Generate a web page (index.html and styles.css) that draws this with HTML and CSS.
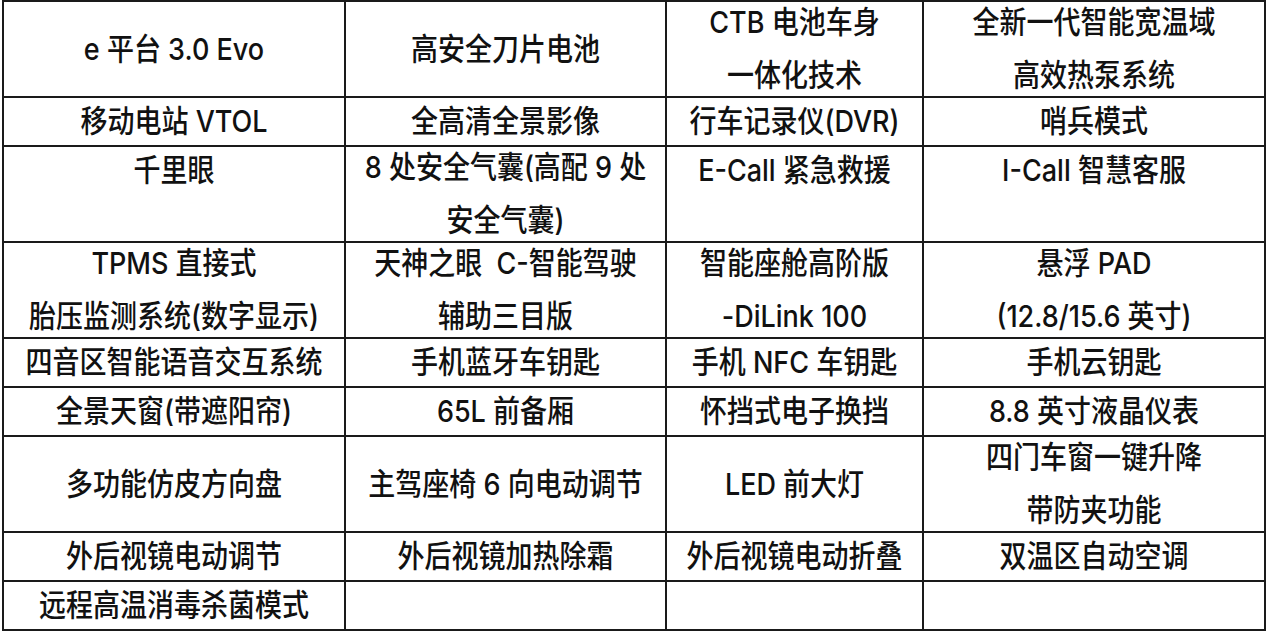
FILE: index.html
```html
<!DOCTYPE html>
<html lang="zh-CN">
<head>
<meta charset="utf-8">
<title>配置表</title>
<link rel="stylesheet" href="styles.css">
</head>
<body>
<table class="spec">
  <colgroup>
    <col class="c1"><col class="c2"><col class="c3"><col class="c4">
  </colgroup>
  <tbody>
    <tr class="tall">
      <td><span class="t">e 平台 3.0 Evo</span></td>
      <td><span class="t">高安全刀片电池</span></td>
      <td><span class="t">CTB 电池车身<br>一体化技术</span></td>
      <td><span class="t">全新一代智能宽温域<br>高效热泵系统</span></td>
    </tr>
    <tr class="short">
      <td><span class="t">移动电站 VTOL</span></td>
      <td><span class="t">全高清全景影像</span></td>
      <td><span class="t">行车记录仪(DVR)</span></td>
      <td><span class="t">哨兵模式</span></td>
    </tr>
    <tr class="tall top">
      <td><span class="t">千里眼</span></td>
      <td><span class="t">8 处安全气囊(高配 9 处<br>安全气囊)</span></td>
      <td><span class="t">E-Call 紧急救援</span></td>
      <td><span class="t">I-Call 智慧客服</span></td>
    </tr>
    <tr class="tall">
      <td><span class="t">TPMS 直接式<br>胎压监测系统(数字显示)</span></td>
      <td><span class="t">天神之眼&nbsp; C-智能驾驶<br>辅助三目版</span></td>
      <td><span class="t">智能座舱高阶版<br>-DiLink 100</span></td>
      <td><span class="t">悬浮 PAD<br>(12.8/15.6 英寸)</span></td>
    </tr>
    <tr class="short">
      <td><span class="t">四音区智能语音交互系统</span></td>
      <td><span class="t">手机蓝牙车钥匙</span></td>
      <td><span class="t">手机 NFC 车钥匙</span></td>
      <td><span class="t">手机云钥匙</span></td>
    </tr>
    <tr class="short">
      <td><span class="t">全景天窗(带遮阳帘)</span></td>
      <td><span class="t">65L 前备厢</span></td>
      <td><span class="t">怀挡式电子换挡</span></td>
      <td><span class="t">8.8 英寸液晶仪表</span></td>
    </tr>
    <tr class="tall">
      <td><span class="t">多功能仿皮方向盘</span></td>
      <td><span class="t">主驾座椅 6 向电动调节</span></td>
      <td><span class="t">LED 前大灯</span></td>
      <td><span class="t">四门车窗一键升降<br>带防夹功能</span></td>
    </tr>
    <tr class="short">
      <td><span class="t">外后视镜电动调节</span></td>
      <td><span class="t">外后视镜加热除霜</span></td>
      <td><span class="t">外后视镜电动折叠</span></td>
      <td><span class="t">双温区自动空调</span></td>
    </tr>
    <tr class="short">
      <td><span class="t">远程高温消毒杀菌模式</span></td>
      <td></td>
      <td></td>
      <td></td>
    </tr>
  </tbody>
</table>
</body>
</html>
```

FILE: styles.css
```css
html, body {
  margin: 0;
  padding: 0;
  background: #ffffff;
}

.spec {
  margin: 0 0 0 2px;
  border-collapse: collapse;
  table-layout: fixed;
  width: 1264px;
  font-family: Inter, "Noto Sans CJK SC", sans-serif;
  font-size: 27px;
  font-weight: 500;
  color: #111111;
}

.c1 { width: 342px; }
.c2 { width: 321px; }
.c3 { width: 257px; }
.c4 { width: 342px; }

.spec td {
  border: 2px solid #1a1a1a;
  padding: 0;
  text-align: center;
  vertical-align: middle;
  line-height: 47px;
  white-space: nowrap;
}

.spec .t {
  display: inline-block;
  vertical-align: top;
  transform: scaleY(1.12);
}

.spec tr.tall { height: 94px; }
.spec tr.short { height: 47px; }
.spec tr.top td { vertical-align: top; }
```
